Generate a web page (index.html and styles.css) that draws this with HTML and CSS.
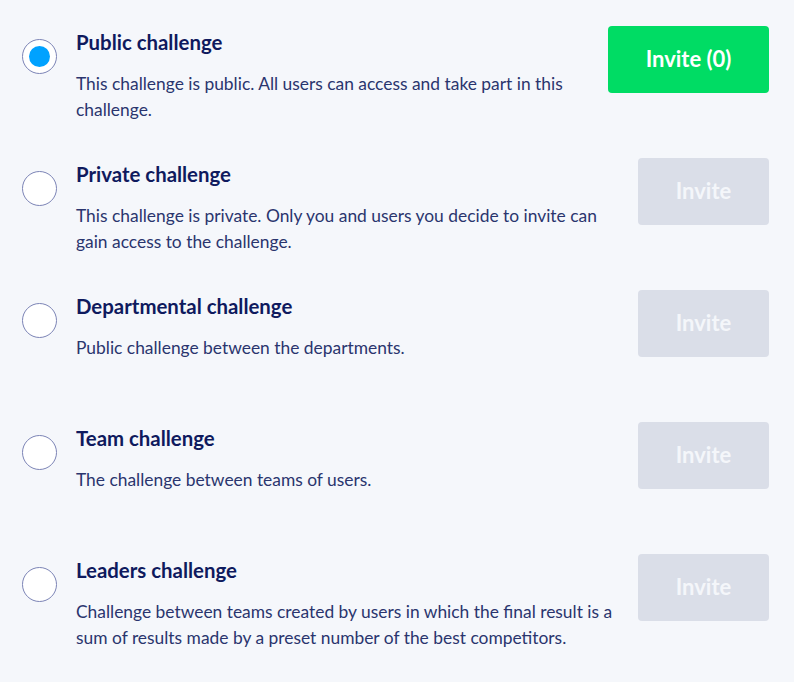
FILE: index.html
```html
<!DOCTYPE html>
<html lang="en">
<head>
    <meta charset="UTF-8">
    <meta name="viewport" content="width=device-width, initial-scale=1.0">
    <title>Challenge type</title>
    <link rel="stylesheet" href="styles.css">
</head>
<body>
    <div class="challenge-list">
        <div class="challenge-row">
            <span class="radio checked"></span>
            <div class="challenge-text">
                <h3>Public challenge</h3>
                <p>This challenge is public. All users can access and take part in this challenge.</p>
            </div>
            <button class="invite-btn active">Invite (0)</button>
        </div>
        <div class="challenge-row">
            <span class="radio"></span>
            <div class="challenge-text">
                <h3>Private challenge</h3>
                <p>This challenge is private. Only you and users you decide to invite can gain access to the challenge.</p>
            </div>
            <button class="invite-btn">Invite</button>
        </div>
        <div class="challenge-row">
            <span class="radio"></span>
            <div class="challenge-text">
                <h3>Departmental challenge</h3>
                <p>Public challenge between the departments.</p>
            </div>
            <button class="invite-btn">Invite</button>
        </div>
        <div class="challenge-row">
            <span class="radio"></span>
            <div class="challenge-text">
                <h3>Team challenge</h3>
                <p>The challenge between teams of users.</p>
            </div>
            <button class="invite-btn">Invite</button>
        </div>
        <div class="challenge-row">
            <span class="radio"></span>
            <div class="challenge-text">
                <h3>Leaders challenge</h3>
                <p>Challenge between teams created by users in which the final result is a sum of results made by a preset number of the best competitors.</p>
            </div>
            <button class="invite-btn">Invite</button>
        </div>
    </div>
</body>
</html>
```

FILE: styles.css
```css
html, body {
    background-color: #f5f7fb;
}
body {
    font-family: Lato, "Open Sans", Arial, sans-serif;
    margin: 0;
    padding: 26px 25px 0 22px;
}
.challenge-row {
    display: flex;
    align-items: flex-start;
    height: 132px;
}
.radio {
    flex: none;
    width: 35px;
    height: 35px;
    margin-top: 13px;
    margin-right: 19px;
    box-sizing: border-box;
    border: 1px solid #7c84b6;
    border-radius: 50%;
    background-color: #fff;
    display: flex;
    align-items: center;
    justify-content: center;
}
.radio.checked::after {
    content: "";
    width: 21px;
    height: 21px;
    border-radius: 50%;
    background-color: #00a2ff;
}
.challenge-text {
    flex: 1;
    margin-right: 20px;
}
.challenge-text h3 {
    margin: 4px 0 0;
    font-size: 20.4px;
    line-height: 24px;
    font-weight: bold;
    color: #0f1a5e;
}
.challenge-text p {
    margin: 17px 0 0;
    font-size: 17.4px;
    line-height: 26px;
    color: #2a356e;
}
.invite-btn {
    flex: none;
    width: 131px;
    height: 67px;
    padding: 0 0 3px;
    border: none;
    border-radius: 4px;
    background-color: #dadee8;
    color: #f4f6fa;
    font-family: inherit;
    font-size: 22px;
    font-weight: bold;
    cursor: pointer;
}
.invite-btn.active {
    width: 161px;
    background-color: #00dc64;
    color: #fff;
}
```
